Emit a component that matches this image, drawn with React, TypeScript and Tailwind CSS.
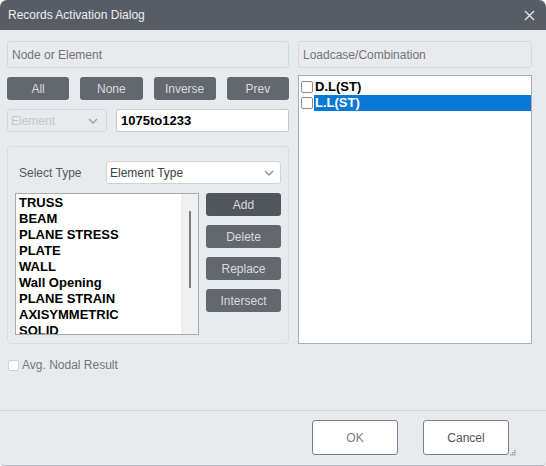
import React from "react";

const Chevron = ({ color }: { color: string }) => (
  <svg width="10" height="6" viewBox="0 0 10 6" className="shrink-0">
    <polyline points="1,1 5,5 9,1" fill="none" stroke={color} strokeWidth="1.3" />
  </svg>
);

const GrayBtn = ({ label, dark }: { label: string; dark?: boolean }) => (
  <div
    className={`h-[23px] flex items-center justify-center rounded-[3px] text-[12px] text-[#d9dbde] ${
      dark ? "bg-[#51565d]" : "bg-[#63686f]"
    }`}
  >
    {label}
  </div>
);

const Checkbox = () => (
  <div className="w-[12px] h-[12px] rounded-[2px] border border-[#8a8a8a] bg-white shrink-0" />
);

export default function App() {
  const items = [
    "TRUSS",
    "BEAM",
    "PLANE STRESS",
    "PLATE",
    "WALL",
    "Wall Opening",
    "PLANE STRAIN",
    "AXISYMMETRIC",
    "SOLID",
  ];
  return (
    <div
      className="w-[546px] h-[466px] bg-white"
      style={{ fontFamily: '"Liberation Sans", Arial, sans-serif' }}
    >
      <div className="w-[546px] h-[466px] flex flex-col rounded-t-[7px] rounded-b-[4px] overflow-hidden bg-[#e9eaed] border-b border-[#b9bcc1]">
        {/* title */}
        <div className="h-[30px] shrink-0 bg-[#585d65] flex items-center justify-between pl-[8px] pr-[11px]">
          <span className="text-[12px] text-[#eceef0]">Records Activation Dialog</span>
          <svg width="11" height="11" viewBox="0 0 11 11">
            <path d="M1 1 L10 10 M10 1 L1 10" stroke="#e6e8ea" strokeWidth="1.3" />
          </svg>
        </div>

        {/* body */}
        <div className="flex gap-[9px] pl-[7px] pr-[14px] pt-[11px]">
          {/* left */}
          <div className="w-[282px] flex flex-col">
            <div className="h-[27px] border border-[#d6d8dc] rounded-[3px] flex items-center pl-[4px] text-[12px] text-[#6f7378]">
              Node or Element
            </div>
            <div className="mt-[9px] grid grid-cols-4 gap-[11px]">
              <GrayBtn label="All" />
              <GrayBtn label="None" />
              <GrayBtn label="Inverse" />
              <GrayBtn label="Prev" />
            </div>
            <div className="mt-[9px] flex gap-[9px]">
              <div className="w-[100px] h-[23px] border border-[#d4d6da] rounded-[3px] flex items-center justify-between pl-[3px] pr-[8px] text-[12px] text-[#c3c6ca]">
                <span>Element</span>
                <Chevron color="#9a9ea3" />
              </div>
              <div className="flex-1 h-[23px] bg-white border border-[#c6c9cd] rounded-[2px] flex items-center pl-[4px] text-[13px] font-bold text-black">
                1075to1233
              </div>
            </div>
            <div className="mt-[14px] h-[198px] border border-[#d9dbdf] rounded-[4px] pt-[14px] px-[7px]">
              <div className="flex items-center h-[23px]">
                <span className="w-[91px] pl-[4px] text-[12px] text-[#55595e]">Select Type</span>
                <div className="flex-1 h-[23px] bg-white border border-[#d0d2d6] rounded-[3px] flex items-center justify-between pl-[3px] pr-[6px] text-[12px] text-[#3c3f43]">
                  <span>Element Type</span>
                  <Chevron color="#8a8e93" />
                </div>
              </div>
              <div className="mt-[9px] flex gap-[7px]">
                <div className="w-[184px] h-[142px] bg-white border border-[#a9acb0] flex overflow-hidden">
                  <div className="flex-1 flex flex-col pl-[3px] pt-[1px] text-[13px] font-bold text-black leading-[16px]">
                    {items.map((t) => (
                      <div key={t} className="h-[16px] shrink-0 whitespace-nowrap">
                        {t}
                      </div>
                    ))}
                  </div>
                  <div className="w-[17px] bg-[#f0f0f0] flex justify-center pt-[17px]">
                    <div className="w-[2px] h-[77px] bg-[#7d7d7d]" />
                  </div>
                </div>
                <div className="w-[75px] flex flex-col gap-[9px]">
                  <GrayBtn label="Add" dark />
                  <GrayBtn label="Delete" />
                  <GrayBtn label="Replace" />
                  <GrayBtn label="Intersect" />
                </div>
              </div>
            </div>
          </div>

          {/* right */}
          <div className="flex-1 flex flex-col">
            <div className="h-[27px] border border-[#d6d8dc] rounded-[3px] flex items-center pl-[4px] text-[12px] text-[#6f7378]">
              Loadcase/Combination
            </div>
            <div className="mt-[7px] h-[269px] bg-white border border-[#a9acb0] pt-[3px] pl-[2px] flex flex-col text-[13px] font-bold leading-[16px]">
              <div className="h-[16px] flex items-center gap-[2px]">
                <Checkbox />
                <span className="text-black">D.L(ST)</span>
              </div>
              <div className="h-[16px] flex items-center gap-[1px]">
                <Checkbox />
                <span className="flex-1 h-[16px] bg-[#0a78d7] text-white pl-[1px]">L.L(ST)</span>
              </div>
            </div>
          </div>
        </div>

        {/* avg checkbox */}
        <div className="mt-[12px] pl-[8px] flex items-center gap-[3px]">
          <div className="w-[11px] h-[11px] rounded-[2px] border border-[#cfd1d5] bg-white" />
          <span className="text-[12px] text-[#73777c]">Avg. Nodal Result</span>
        </div>

        <div className="flex-1" />
        <div className="h-px bg-[#d2d5d9]" />
        <div className="h-[54px] flex items-start pt-[9px] pr-[37px] justify-end gap-[25px] relative">
          <div className="w-[86px] h-[35px] bg-white border border-[#7c8086] rounded-[3px] flex items-center justify-center text-[12px] text-[#7d8085]">
            OK
          </div>
          <div className="w-[86px] h-[35px] bg-white border border-[#7c8086] rounded-[3px] flex items-center justify-center text-[12px] text-[#4f5358]">
            Cancel
          </div>
          <svg width="7" height="7" viewBox="0 0 7 7" className="absolute right-[30px] bottom-[9px]">
            <rect x="5" y="1" width="1.5" height="1.5" fill="#a0a4a8" />
            <rect x="3" y="3" width="1.5" height="1.5" fill="#a0a4a8" />
            <rect x="5" y="3" width="1.5" height="1.5" fill="#a0a4a8" />
            <rect x="1" y="5" width="1.5" height="1.5" fill="#a0a4a8" />
            <rect x="3" y="5" width="1.5" height="1.5" fill="#a0a4a8" />
            <rect x="5" y="5" width="1.5" height="1.5" fill="#a0a4a8" />
          </svg>
        </div>
      </div>
    </div>
  );
}
